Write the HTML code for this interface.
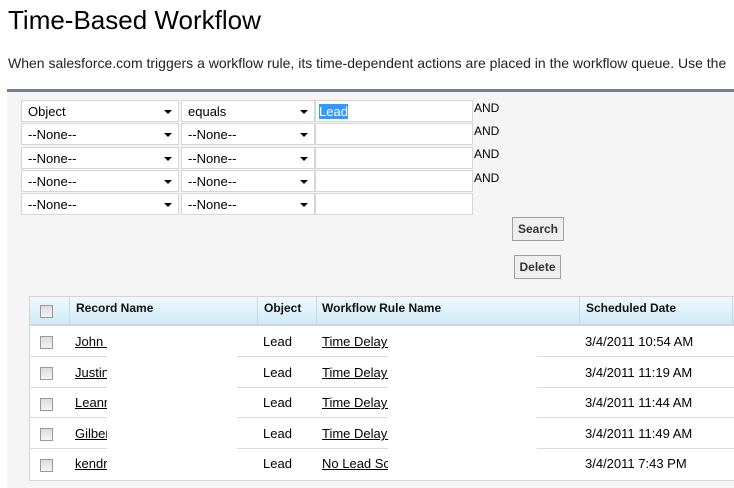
<!DOCTYPE html>
<html><head><style>
*{margin:0;padding:0;box-sizing:border-box}
body{width:734px;height:488px;overflow:hidden;background:#fff;font-family:"Liberation Sans",Arial,sans-serif;color:#000;position:relative}
.a{position:absolute}
h1{position:absolute;left:8px;top:5px;font-size:26px;font-weight:normal;white-space:nowrap}
.desc{left:8px;top:55px;font-size:14px;white-space:nowrap;color:#222}
.bar{left:7px;top:89px;width:727px;height:3px;background:#747e91}
.panel{left:7px;top:92px;width:727px;height:396px;background:#f5f5f5}
.sel{position:absolute;height:22px;background:#fff;border:1px solid #d4d6da;font-size:13px;padding:3px 0 0 6px}
.sel:after{content:"";position:absolute;right:6px;top:9px;border-left:4px solid transparent;border-right:4px solid transparent;border-top:4px solid #000}
.inp{position:absolute;height:22px;background:#fff;border:1px solid #d4d6da;font-size:13px;padding:3px 0 0 3px}
.and{font-size:12px}
.btn{position:absolute;height:24px;border:1px solid #a0a0a0;background:#eee;font-size:12px;font-weight:bold;text-align:center;line-height:22px;color:#333}
.tbl{left:29px;top:296px;width:705px;height:185px;background:#fff;border:1px solid #d4d4d4;border-right:none}
.hdr{left:30px;top:297px;width:704px;height:29px;background:linear-gradient(#f0f9fd,#cfeaf6);border-bottom:2px solid #d2d6d9}
.hd{position:absolute;top:301px;font-size:12px;font-weight:bold;color:#111}
.vl{position:absolute;top:297px;width:1px;height:29px;background:#cdd6de}
.row{position:absolute;left:30px;width:704px;height:1px;background:#dadada}
.cb{position:absolute;left:40px;width:13px;height:13px;border:1px solid #999;background:linear-gradient(#dcdcdc,#f4f4f4)}
.t{position:absolute;font-size:13px;white-space:nowrap}
.u{text-decoration:underline}
.wh{position:absolute;background:#fff}
</style></head><body>
<h1>Time-Based Workflow</h1>
<div class="a desc">When salesforce.com triggers a workflow rule, its time-dependent actions are placed in the workflow queue. Use the</div>
<div class="a bar"></div>
<div class="a panel"></div>

<div class="sel" style="left:21px;top:100px;width:158px">Object</div>
<div class="sel" style="left:181px;top:100px;width:134px">equals</div>
<div class="inp" style="left:315px;top:100px;width:158px"><span style="background:#3399ff;color:#fff">Lead</span></div>
<div class="a and" style="left:474px;top:101px">AND</div>

<div class="sel" style="left:21px;top:123px;width:158px">--None--</div>
<div class="sel" style="left:181px;top:123px;width:134px">--None--</div>
<div class="inp" style="left:315px;top:123px;width:158px"></div>
<div class="a and" style="left:474px;top:124px">AND</div>

<div class="sel" style="left:21px;top:147px;width:158px">--None--</div>
<div class="sel" style="left:181px;top:147px;width:134px">--None--</div>
<div class="inp" style="left:315px;top:147px;width:158px"></div>
<div class="a and" style="left:474px;top:147px">AND</div>

<div class="sel" style="left:21px;top:170px;width:158px">--None--</div>
<div class="sel" style="left:181px;top:170px;width:134px">--None--</div>
<div class="inp" style="left:315px;top:170px;width:158px"></div>
<div class="a and" style="left:474px;top:171px">AND</div>

<div class="sel" style="left:21px;top:193px;width:158px">--None--</div>
<div class="sel" style="left:181px;top:193px;width:134px">--None--</div>
<div class="inp" style="left:315px;top:193px;width:158px"></div>

<div class="btn" style="left:512px;top:217px;width:52px">Search</div>
<div class="btn" style="left:514px;top:255px;width:47px">Delete</div>

<div class="a tbl"></div>
<div class="a hdr"></div>
<div class="vl" style="left:69px"></div>
<div class="vl" style="left:257px"></div>
<div class="vl" style="left:316px"></div>
<div class="vl" style="left:579px"></div>
<div class="vl" style="left:732px"></div>
<div class="cb" style="top:305px"></div>
<div class="hd" style="left:76px">Record Name</div>
<div class="hd" style="left:264px">Object</div>
<div class="hd" style="left:322px">Workflow Rule Name</div>
<div class="hd" style="left:586px">Scheduled Date</div>

<div class="row" style="top:356px"></div>
<div class="row" style="top:387px"></div>
<div class="row" style="top:417px"></div>
<div class="row" style="top:448px"></div>

<div class="cb" style="top:336px"></div>
<div class="cb" style="top:367px"></div>
<div class="cb" style="top:398px"></div>
<div class="cb" style="top:428px"></div>
<div class="cb" style="top:459px"></div>

<div class="t u" style="left:75px;top:334px">John G</div>
<div class="t u" style="left:75px;top:365px">Justin</div>
<div class="t u" style="left:75px;top:395px">Leanne</div>
<div class="t u" style="left:75px;top:426px">Gilbert</div>
<div class="t u" style="left:75px;top:456px">kendra</div>

<div class="t" style="left:263px;top:334px">Lead</div>
<div class="t" style="left:263px;top:365px">Lead</div>
<div class="t" style="left:263px;top:395px">Lead</div>
<div class="t" style="left:263px;top:426px">Lead</div>
<div class="t" style="left:263px;top:456px">Lead</div>

<div class="t u" style="left:322px;top:334px">Time Delay Rule</div>
<div class="t u" style="left:322px;top:365px">Time Delay Rule</div>
<div class="t u" style="left:322px;top:395px">Time Delay Rule</div>
<div class="t u" style="left:322px;top:426px">Time Delay Rule</div>
<div class="t u" style="left:322px;top:456px">No Lead Score</div>

<div class="t" style="left:585px;top:334px">3/4/2011 10:54 AM</div>
<div class="t" style="left:585px;top:365px">3/4/2011 11:19 AM</div>
<div class="t" style="left:585px;top:395px">3/4/2011 11:44 AM</div>
<div class="t" style="left:585px;top:426px">3/4/2011 11:49 AM</div>
<div class="t" style="left:585px;top:456px">3/4/2011 7:43 PM</div>

<div class="wh" style="left:107px;top:330px;width:130px;height:150px"></div>
<div class="wh" style="left:388px;top:330px;width:149px;height:150px"></div>
</body></html>
